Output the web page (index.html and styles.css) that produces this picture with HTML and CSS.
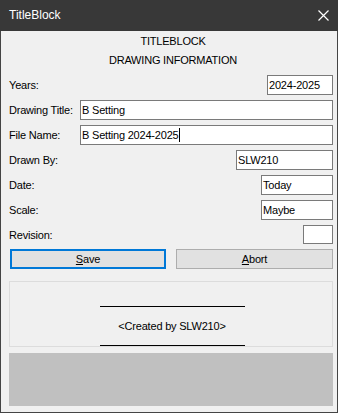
FILE: index.html
```html
<!DOCTYPE html>
<html lang="en">
<head>
    <meta charset="UTF-8">
    <meta name="viewport" content="width=device-width, initial-scale=1.0">
    <title>TitleBlock</title>
    <link rel="stylesheet" href="styles.css">
</head>
<body>

<div class="window">
    <!-- Title bar -->
    <div class="titlebar">
        <span class="title">TitleBlock</span>
        <svg class="close" width="11" height="11" viewBox="0 0 11 11">
            <path d="M0.5 0.5 L10.5 10.5 M10.5 0.5 L0.5 10.5" stroke="#fff" stroke-width="1.2" fill="none"/>
        </svg>
    </div>

    <div class="content">
        <div class="heading">
            <div>TITLEBLOCK</div>
            <div>DRAWING INFORMATION</div>
        </div>

        <div class="form">
            <div class="row">
                <span class="label">Years:</span>
                <div class="field years">2024-2025</div>
            </div>
            <div class="row">
                <span class="label">Drawing Title:</span>
                <div class="field wide">B Setting</div>
            </div>
            <div class="row">
                <span class="label">File Name:</span>
                <div class="field wide">B Setting 2024-2025<span class="caret"></span></div>
            </div>
            <div class="row">
                <span class="label">Drawn By:</span>
                <div class="field drawn">SLW210</div>
            </div>
            <div class="row">
                <span class="label">Date:</span>
                <div class="field short">Today</div>
            </div>
            <div class="row">
                <span class="label">Scale:</span>
                <div class="field short">Maybe</div>
            </div>
            <div class="row revision">
                <span class="label">Revision:</span>
                <div class="field tiny"></div>
            </div>

            <div class="buttons">
                <div class="btn btn-default"><u>S</u>ave</div>
                <div class="btn"><u>A</u>bort</div>
            </div>
        </div>

        <div class="groupbox">
            <div class="rule"></div>
            <div class="credit">&lt;Created by SLW210&gt;</div>
            <div class="rule"></div>
        </div>

        <div class="graybox"></div>
    </div>
</div>

</body>
</html>
```

FILE: styles.css
```css
body {
    margin: 0;
    font-family: "Liberation Sans", Arial, sans-serif;
    font-size: 11px;
    letter-spacing: -0.2px;
    color: #000;
    background-color: #f0f0f0;
}
.window {
    width: 338px;
    height: 413px;
    box-sizing: border-box;
    border: 1px solid #444;
    border-top: none;
    background-color: #f0f0f0;
    display: flex;
    flex-direction: column;
}
.titlebar {
    height: 31px;
    margin: 0 -1px;
    background-color: #383838;
    color: #fff;
    display: flex;
    align-items: center;
    justify-content: space-between;
    padding: 0 9px 0 9px;
}
.title {
    font-size: 12px;
    letter-spacing: 0;
    padding-bottom: 1px;
}
.close {
    display: block;
    margin-top: -1px;
}
.content {
    padding: 1px 4px 0 8px;
    display: flex;
    flex-direction: column;
}
.heading {
    text-align: center;
    line-height: 19px;
    padding-left: 4px;
}
.form {
    margin-top: 5px;
    display: flex;
    flex-direction: column;
    gap: 5px;
}
.row {
    display: flex;
    align-items: center;
    justify-content: space-between;
    height: 20px;
}
.row.revision {
    height: 19px;
}
.label {
    white-space: nowrap;
}
.field {
    box-sizing: border-box;
    height: 100%;
    border: 1px solid #7a7a7a;
    background-color: #fff;
    padding: 0 1px;
    line-height: 18px;
    white-space: nowrap;
}
.field.years { width: 66px; }
.field.wide { width: 253px; }
.field.drawn { width: 97px; }
.field.short { width: 72px; }
.field.tiny { width: 30px; }
.caret {
    display: inline-block;
    width: 1px;
    height: 14px;
    background-color: #000;
    vertical-align: -3px;
}
.buttons {
    display: flex;
    justify-content: space-between;
    padding-left: 1px;
}
.btn {
    box-sizing: border-box;
    width: 157px;
    height: 20px;
    border: 1px solid #adadad;
    background-color: #e1e1e1;
    text-align: center;
    line-height: 18px;
}
.btn-default {
    width: 156px;
    border: 2px solid #0078d7;
    line-height: 16px;
}
.groupbox {
    margin-top: 12px;
    height: 66px;
    box-sizing: border-box;
    border: 1px solid #dcdcdc;
    padding-top: 24px;
    display: flex;
    flex-direction: column;
    align-items: center;
}
.rule {
    width: 145px;
    height: 1px;
    background-color: #000;
    margin-left: 2px;
}
.credit {
    line-height: 38px;
    padding-left: 2px;
}
.graybox {
    margin-top: 6px;
    height: 53px;
    background-color: #c0c0c0;
}
```
